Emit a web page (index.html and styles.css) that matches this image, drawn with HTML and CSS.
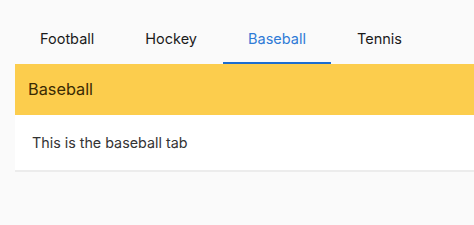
FILE: index.html
```html
<!DOCTYPE html>
<html lang="en">
<head>
  <meta charset="UTF-8">
  <title>Sports Tabs</title>
  <link rel="stylesheet" href="styles.css">
</head>
<body>

<div class="container">
  <div class="tabs">
    <button class="tablink">Football</button>
    <button class="tablink">Hockey</button>
    <button class="tablink active">Baseball</button>
    <button class="tablink">Tennis</button>
  </div>

  <!-- Baseball Tab -->
  <div class="panel">
    <div class="panel-header">Baseball</div>
    <div class="panel-body">This is the baseball tab</div>
  </div>
</div>

</body>
</html>
```

FILE: styles.css
```css
body {
  margin: 0;
  font-family: Inter, "Liberation Sans", Arial, sans-serif;
  background-color: #fafafa;
  color: #222;
}

.container {
  padding: 14px 0 0 15px;
}

.tabs {
  display: flex;
  gap: 1px;
}

.tablink {
  background: none;
  border: none;
  border-bottom: 2px solid transparent;
  font-family: inherit;
  font-size: 14.5px;
  color: #1a1a1a;
  height: 50px;
  padding: 0 25px;
  cursor: pointer;
}

.tablink.active {
  color: #2f7ad6;
  border-bottom-color: #1c6ccf;
}

.panel {
  background-color: #fff;
  border-bottom: 2px solid #ececec;
}

.panel-header {
  background-color: #fccd4d;
  color: #3a2a03;
  font-size: 16.3px;
  height: 51px;
  line-height: 51px;
  padding-left: 13px;
}

.panel-body {
  font-size: 14.3px;
  color: #333;
  height: 55px;
  line-height: 55px;
  padding-left: 17px;
}
```
